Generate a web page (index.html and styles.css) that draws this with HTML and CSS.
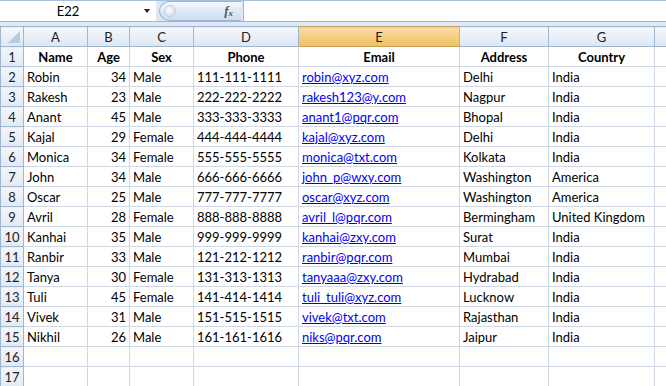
FILE: index.html
```html
<!DOCTYPE html>
<html>
<head>
<meta charset="utf-8">
<link rel="stylesheet" href="styles.css">
</head>
<body>
<div class="app">
  <div class="fbar">
    <div class="namebox"><span class="ref">E22</span><span class="arrow"></span></div>
    <div class="pill"><span class="knob"></span><span class="fx">f<sub>x</sub></span></div>
    <div class="finput"></div>
  </div>
  <div class="gap"></div>
  <table class="sheet">
    <colgroup>
      <col class="c-rh"><col class="c-a"><col class="c-b"><col class="c-c"><col class="c-d"><col class="c-e"><col class="c-f"><col class="c-g"><col class="c-h">
    </colgroup>
    <tr class="colhead">
      <th class="corner"><span class="tri"></span></th><th>A</th><th>B</th><th>C</th><th>D</th><th class="sel">E</th><th>F</th><th>G</th><th></th>
    </tr>
    <tr class="bold"><th>1</th><td class="ctr">Name</td><td class="ctr">Age</td><td class="ctr">Sex</td><td class="ctr">Phone</td><td class="ctr">Email</td><td class="ctr">Address</td><td class="ctr">Country</td><td></td></tr>
    <tr><th>2</th><td>Robin</td><td class="num">34</td><td>Male</td><td>111-111-1111</td><td><a>robin@xyz.com</a></td><td>Delhi</td><td>India</td><td></td></tr>
    <tr><th>3</th><td>Rakesh</td><td class="num">23</td><td>Male</td><td>222-222-2222</td><td><a>rakesh123@y.com</a></td><td>Nagpur</td><td>India</td><td></td></tr>
    <tr><th>4</th><td>Anant</td><td class="num">45</td><td>Male</td><td>333-333-3333</td><td><a>anant1@pqr.com</a></td><td>Bhopal</td><td>India</td><td></td></tr>
    <tr><th>5</th><td>Kajal</td><td class="num">29</td><td>Female</td><td>444-444-4444</td><td><a>kajal@xyz.com</a></td><td>Delhi</td><td>India</td><td></td></tr>
    <tr><th>6</th><td>Monica</td><td class="num">34</td><td>Female</td><td>555-555-5555</td><td><a>monica@txt.com</a></td><td>Kolkata</td><td>India</td><td></td></tr>
    <tr><th>7</th><td>John</td><td class="num">34</td><td>Male</td><td>666-666-6666</td><td><a>john_p@wxy.com</a></td><td>Washington</td><td>America</td><td></td></tr>
    <tr><th>8</th><td>Oscar</td><td class="num">25</td><td>Male</td><td>777-777-7777</td><td><a>oscar@xyz.com</a></td><td>Washington</td><td>America</td><td></td></tr>
    <tr><th>9</th><td>Avril</td><td class="num">28</td><td>Female</td><td>888-888-8888</td><td><a>avril_l@pqr.com</a></td><td>Bermingham</td><td>United Kingdom</td><td></td></tr>
    <tr><th>10</th><td>Kanhai</td><td class="num">35</td><td>Male</td><td>999-999-9999</td><td><a>kanhai@zxy.com</a></td><td>Surat</td><td>India</td><td></td></tr>
    <tr><th>11</th><td>Ranbir</td><td class="num">33</td><td>Male</td><td>121-212-1212</td><td><a>ranbir@pqr.com</a></td><td>Mumbai</td><td>India</td><td></td></tr>
    <tr><th>12</th><td>Tanya</td><td class="num">30</td><td>Female</td><td>131-313-1313</td><td><a>tanyaaa@zxy.com</a></td><td>Hydrabad</td><td>India</td><td></td></tr>
    <tr><th>13</th><td>Tuli</td><td class="num">45</td><td>Female</td><td>141-414-1414</td><td><a>tuli_tuli@xyz.com</a></td><td>Lucknow</td><td>India</td><td></td></tr>
    <tr><th>14</th><td>Vivek</td><td class="num">31</td><td>Male</td><td>151-515-1515</td><td><a>vivek@txt.com</a></td><td>Rajasthan</td><td>India</td><td></td></tr>
    <tr><th>15</th><td>Nikhil</td><td class="num">26</td><td>Male</td><td>161-161-1616</td><td><a>niks@pqr.com</a></td><td>Jaipur</td><td>India</td><td></td></tr>
    <tr><th>16</th><td></td><td></td><td></td><td></td><td></td><td></td><td></td><td></td></tr>
    <tr><th>17</th><td></td><td></td><td></td><td></td><td></td><td></td><td></td><td></td></tr>
  </table>
</div>
</body>
</html>
```
FILE: styles.css
```css
html, body { margin: 0; padding: 0; background: #fff; }
body { width: 666px; height: 386px; overflow: hidden; font-family: Lato, "Liberation Sans", sans-serif; font-size: 13px; color: #000; }
.app { width: 666px; }
.fbar { display: flex; height: 22px; background: #dfe8f5; border-bottom: 1px solid #9eb6d6; box-sizing: border-box; border-top: 1px solid #a8bfdc; }
.namebox { width: 156px; background: #fff; display: flex; align-items: center; position: relative; }
.ref { width: 136px; text-align: center; font-size: 13px; }
.arrow { width: 0; height: 0; border-left: 3.5px solid transparent; border-right: 3.5px solid transparent; border-top: 4px solid #222; margin-left: 8px; }
.pill { width: 82px; margin-left: 3px; height: 20px; border-radius: 11px 0 0 11px; background: linear-gradient(#f4f8fd, #cddcf0); border: 1px solid #9db4d4; border-right: none; box-sizing: border-box; display: flex; align-items: center; justify-content: space-between; padding: 0 8px 0 4px; }
.knob { width: 10px; height: 10px; border-radius: 50%; background: radial-gradient(circle at 40% 40%, #fff, #c8d3e0); border: 1px solid #c6d1df; }
.fx { font-family: "Liberation Serif", serif; font-style: italic; font-weight: bold; font-size: 13px; color: #555; }
.fx sub { font-size: 9px; vertical-align: -1px; }
.finput { flex: 1; background: #fff; border-left: 1px solid #9eb6d6; margin-left: 2px; }
.gap { height: 4px; background: #dfe8f5; }
.sheet { border-collapse: collapse; table-layout: fixed; width: 666px; }
.c-rh { width: 23px; } .c-a { width: 64px; } .c-b { width: 42px; } .c-c { width: 64px; } .c-d { width: 105px; } .c-e { width: 161px; } .c-f { width: 89px; } .c-g { width: 106px; } .c-h { width: 12px; }
.sheet tr { height: 20px; }
.sheet td, .sheet th { border: 1px solid #d0d7e5; padding: 0 3px; height: 19px; white-space: nowrap; overflow: hidden; line-height: 18px; }
.sheet th { font-weight: normal; text-align: center; color: #222; background: linear-gradient(#f3f6fb, #e2eaf5); border-color: #9eb6ce; padding: 0; }
.colhead th { background: linear-gradient(#f6f9fd, #dde6f2); border-bottom-color: #9eb6ce; }
.colhead th.sel { background: linear-gradient(#f9dca6, #f1c15f); border-color: #c5a25a #9eb6ce; }
.corner { position: relative; }
.tri { position: absolute; right: 3px; bottom: 3px; width: 0; height: 0; border-left: 12px solid transparent; border-bottom: 12px solid #b9c9dc; }
.bold td { font-weight: bold; }
.ctr { text-align: center; }
.num { text-align: right; }
a { color: #0000ff; text-decoration: underline; }
```
